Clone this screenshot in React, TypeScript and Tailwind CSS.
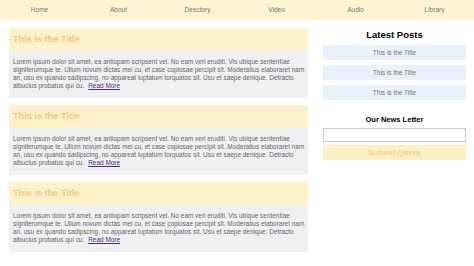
import React from "react";

const navItems = ["Home", "About", "Directory", "Video", "Audio", "Library"];

const lorem =
  "Lorem ipsum dolor sit amet, ea antiopam scripsent vel. No eam veri eruditi. Vis ubique sententiae signiferumque te. Ullum novum dictas mei cu, et case copiosae percipit sit. Moderatius elaboraret nam an, usu ex quando sadipscing, no appareat luptatum torquatos sit. Usu et saepe denique. Detracto albucius probatus qui cu.";

function PostCard() {
  return (
    <div>
      <div className="flex h-[23px] items-center bg-[#fdf2cc] px-[4px]">
        <h2 className="text-[9.2px] font-bold text-[#f5c77c]">This is the Title</h2>
      </div>
      <div className="bg-[#f0f0f2] pb-[8px] pl-[4px] pr-[2px] pt-[7px]">
        <p className="text-[6.45px] leading-[8px] text-[#666]">
          {lorem}
          <a href="#" className="ml-[4px] text-[#4b2a82] underline">
            Read More
          </a>
        </p>
      </div>
    </div>
  );
}

export default function App() {
  return (
    <div className="min-h-[266px] w-[474px] bg-white font-['Liberation_Sans',Arial,sans-serif]">
      {/* Nav */}
      <nav className="grid h-[20px] grid-cols-6 items-center bg-[#fdf4d2]">
        {navItems.map((item) => (
          <span key={item} className="text-center text-[6.5px] text-[#777]">
            {item}
          </span>
        ))}
      </nav>

      <div className="flex gap-[15px] pl-[9px] pr-[8px] pt-[8px]">
        {/* Posts */}
        <main className="flex w-[299px] flex-col gap-[7px]">
          <PostCard />
          <PostCard />
          <PostCard />
        </main>

        {/* Sidebar */}
        <aside className="flex flex-1 flex-col">
          <h3 className="text-center text-[9.5px] font-bold leading-[14px] text-black">
            Latest Posts
          </h3>
          <div className="mt-[3px] flex flex-col gap-[5px]">
            {[0, 1, 2].map((i) => (
              <div
                key={i}
                className="flex h-[15px] items-center justify-center bg-[#e9f1fa] text-[6.5px] text-[#777]"
              >
                This is the Title
              </div>
            ))}
          </div>
          <h4 className="mt-[15px] text-center text-[7.5px] font-bold leading-[10px] text-black">
            Our News Letter
          </h4>
          <input
            type="text"
            className="mt-[3px] h-[14px] w-full border border-[#ccc] bg-white"
          />
          <button className="mt-[3px] h-[15px] w-full bg-[#fdf0c4] text-[8px] font-bold text-[#f6d08a]">
            Submit Query
          </button>
        </aside>
      </div>
    </div>
  );
}
